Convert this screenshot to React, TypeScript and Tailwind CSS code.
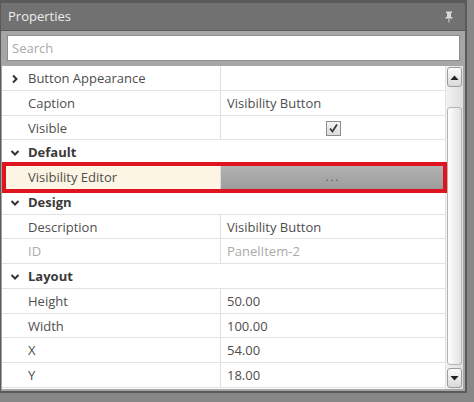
import React from 'react';

type Row =
  | { kind: 'cat'; label: string; open: boolean }
  | { kind: 'prop'; label: string; value?: string; disabled?: boolean; check?: boolean; editor?: boolean; collapsed?: boolean };

const rows: Row[] = [
  { kind: 'prop', label: 'Button Appearance', collapsed: true },
  { kind: 'prop', label: 'Caption', value: 'Visibility Button' },
  { kind: 'prop', label: 'Visible', check: true },
  { kind: 'cat', label: 'Default', open: true },
  { kind: 'prop', label: 'Visibility Editor', editor: true },
  { kind: 'cat', label: 'Design', open: true },
  { kind: 'prop', label: 'Description', value: 'Visibility Button' },
  { kind: 'prop', label: 'ID', value: 'PanelItem-2', disabled: true },
  { kind: 'cat', label: 'Layout', open: true },
  { kind: 'prop', label: 'Height', value: '50.00' },
  { kind: 'prop', label: 'Width', value: '100.00' },
  { kind: 'prop', label: 'X', value: '54.00' },
  { kind: 'prop', label: 'Y', value: '18.00' },
];

const ChevronDown = () => (
  <svg width="10" height="8" viewBox="0 0 10 8" className="shrink-0">
    <path d="M1.5 2 L5 5.5 L8.5 2" fill="none" stroke="#333" strokeWidth="2" />
  </svg>
);

const ChevronRight = () => (
  <svg width="10" height="10" viewBox="0 0 10 10" className="shrink-0">
    <path d="M3 1.5 L6.5 5 L3 8.5" fill="none" stroke="#333" strokeWidth="2" />
  </svg>
);

const Pin = () => (
  <svg width="8" height="12" viewBox="0 0 8 12">
    <rect x="1" y="0.5" width="6" height="1.5" fill="#d8d8d8" />
    <rect x="2" y="2" width="4" height="4" fill="#d8d8d8" />
    <rect x="0.5" y="6" width="7" height="1.5" fill="#d8d8d8" />
    <rect x="3.5" y="7.5" width="1" height="4" fill="#d8d8d8" />
  </svg>
);

const CheckBox = () => (
  <div className="w-[15px] h-[15px] border border-[#8d8d8d] bg-gradient-to-b from-[#f4f4f4] to-[#dcdcdc] flex items-center justify-center">
    <svg width="11" height="11" viewBox="0 0 11 11">
      <path d="M2 5.5 L4.5 8.5 L9 1.5" fill="none" stroke="#3a3a3a" strokeWidth="1.8" />
    </svg>
  </div>
);

const Scrollbar = () => (
  <div className="w-[18px] h-full flex flex-col bg-gradient-to-r from-[#f2f2f2] to-[#dedede] border-l border-[#e4e4e4] py-[1px]">
    <div className="h-[20px] mx-[1px] rounded-[3px] border border-[#9d9d9d] bg-gradient-to-b from-[#fbfbfb] to-[#d9d9d9] flex items-center justify-center">
      <svg width="9" height="5" viewBox="0 0 9 5">
        <path d="M0.5 5 L4.5 0.5 L8.5 5 Z" fill="#222" />
      </svg>
    </div>
    <div className="h-[20px]" />
    <div className="flex-1 mx-[1px] rounded-[3px] border border-[#b4b4b4] bg-gradient-to-r from-[#fdfdfd] to-[#e2e2e2]" />
    <div className="h-[3px]" />
    <div className="h-[20px] mx-[1px] rounded-[3px] border border-[#9d9d9d] bg-gradient-to-b from-[#fbfbfb] to-[#d9d9d9] flex items-center justify-center">
      <svg width="9" height="5" viewBox="0 0 9 5">
        <path d="M0.5 0 L4.5 4.5 L8.5 0 Z" fill="#222" />
      </svg>
    </div>
  </div>
);

const GridRow = ({ row }: { row: Row }) => {
  if (row.kind === 'cat') {
    return (
      <div className="h-[24.75px] flex items-center border-b border-[#e2e2e2] pl-[8px] pt-[2px] gap-[8px]">
        <ChevronDown />
        <span className="font-bold text-[#3a3a3a]">{row.label}</span>
      </div>
    );
  }
  return (
    <div className="h-[24.75px] flex border-b border-[#e2e2e2]">
      <div
        className={`w-[219px] shrink-0 flex items-center pl-[8px] pt-[2px] gap-[8px] border-r border-[#dedede] ${
          row.editor ? 'bg-[#fcf5e3]' : ''
        } ${row.disabled ? 'text-[#ababab]' : 'text-[#4e4e4e]'}`}
      >
        <div className="w-[10px] flex justify-center">{row.collapsed ? <ChevronRight /> : null}</div>
        <span>{row.label}</span>
      </div>
      {row.editor ? (
        <div className="flex-1 flex items-center justify-center bg-gradient-to-b from-[#b3b3b3] to-[#9c9c9c] text-[#4e4e4e] tracking-[2px] text-[11px]">
          ...
        </div>
      ) : (
        <div
          className={`flex-1 flex items-center px-[6px] pt-[2px] ${
            row.check ? 'justify-center' : ''
          } ${row.disabled ? 'text-[#ababab]' : 'text-[#4e4e4e]'}`}
        >
          {row.check ? <CheckBox /> : row.value}
        </div>
      )}
    </div>
  );
};

export default function App() {
  return (
    <div
      className="relative w-[474px] h-[402px] bg-[#878787] overflow-hidden"
      style={{ fontFamily: '"Open Sans", "Noto Sans", sans-serif' }}
    >
      <div className="w-[467px] h-[393px] bg-[#5a5a5a] pt-[3px] pl-[1px] pr-[2px] pb-[2px] flex flex-col">
        <div className="h-[27px] shrink-0 bg-[#717171] rounded-tr-[3px] flex items-center justify-between pl-[7px] pr-[12px]">
          <span className="text-[13px] text-[#ececec]">Properties</span>
          <Pin />
        </div>
        <div className="flex-1 mt-[1px] bg-[#a6a6a6] pl-[1px] pr-[2px] pt-[4px] pb-[2px] flex flex-col gap-[5px]">
          <div className="mx-[5px] mr-[3px] h-[26px] bg-white border border-[#8c8c8c] flex items-center px-[4px] pt-[2px]">
            <span className="text-[13px] text-[#a9a9a9]">Search</span>
          </div>
          <div className="flex-1 bg-white flex text-[13px]">
            <div className="flex-1 flex flex-col">
              {rows.map((r, i) => (
                <GridRow key={i} row={r} />
              ))}
            </div>
            <Scrollbar />
          </div>
        </div>
      </div>
      <div className="absolute left-[2px] top-[162px] w-[445px] h-[31px] border-[4px] border-[#e0141e]" />
    </div>
  );
}
